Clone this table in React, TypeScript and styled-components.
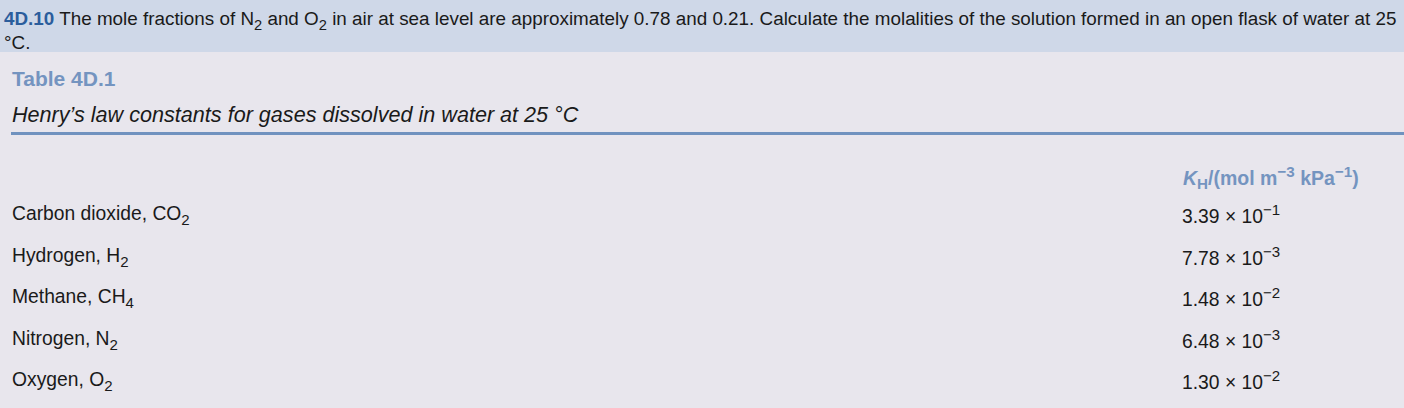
import React from 'react'
import styled, { createGlobalStyle } from 'styled-components'

//-----------------------------------------------------------------------------
// Data
//-----------------------------------------------------------------------------
const gases = [
  { name: 'Carbon dioxide, CO', sub: '2', mantissa: '3.39', exp: '−1' },
  { name: 'Hydrogen, H', sub: '2', mantissa: '7.78', exp: '−3' },
  { name: 'Methane, CH', sub: '4', mantissa: '1.48', exp: '−2' },
  { name: 'Nitrogen, N', sub: '2', mantissa: '6.48', exp: '−3' },
  { name: 'Oxygen, O', sub: '2', mantissa: '1.30', exp: '−2' }
]

//-----------------------------------------------------------------------------
// Component
//-----------------------------------------------------------------------------
const App = () => {
  return (
    <>
      <GlobalStyle />
      <Page>
        <Question>
          <QuestionNumber>4D.10</QuestionNumber> The mole fractions of N<Sub>2</Sub> and O<Sub>2</Sub> in
          air at sea level are approximately 0.78 and 0.21. Calculate the molalities of the solution
          formed in an open flask of water at 25 °C.
        </Question>
        <TableBlock>
          <TableLabel>Table 4D.1</TableLabel>
          <TableCaption>Henry’s law constants for gases dissolved in water at 25 °C</TableCaption>
          <Rows>
            <HeaderRow>
              <Cell />
              <HeadCell>
                <i>K</i><Sub>H</Sub>/(mol m<Sup>−3</Sup> kPa<Sup>−1</Sup>)
              </HeadCell>
            </HeaderRow>
            {gases.map(gas => (
              <Row key={gas.name}>
                <Cell>{gas.name}<Sub>{gas.sub}</Sub></Cell>
                <Cell>{gas.mantissa} × 10<Sup>{gas.exp}</Sup></Cell>
              </Row>
            ))}
          </Rows>
        </TableBlock>
      </Page>
    </>
  )
}

//-----------------------------------------------------------------------------
// Styled Components
//-----------------------------------------------------------------------------
const GlobalStyle = createGlobalStyle`
  html, body {
    margin: 0;
    padding: 0;
    background: #e8e6ed;
  }
  body {
    font-family: "Liberation Sans", Arial, sans-serif;
    color: #1a1a1a;
  }
`

const Page = styled.div`
  width: 1404px;
  height: 408px;
  overflow: hidden;
  background: #e8e6ed;
`

const Question = styled.div`
  background: #cfd8e8;
  box-sizing: border-box;
  padding: 8px 4px 0 4px;
  font-size: 18.85px;
  line-height: 22px;
  height: 52px;
`

const QuestionNumber = styled.span`
  color: #2b5d9c;
  font-weight: bold;
`

const Sub = styled.sub`
  font-size: 0.78em;
  vertical-align: -0.32em;
  line-height: 1;
`

const Sup = styled.sup`
  font-size: 0.78em;
  vertical-align: 0.5em;
  line-height: 1;
`

const TableBlock = styled.div`
  padding: 15px 0 0 11px;
`

const TableLabel = styled.div`
  color: #7494c0;
  font-weight: bold;
  font-size: 21px;
  line-height: 24px;
  padding-left: 1px;
`

const TableCaption = styled.div`
  font-style: italic;
  font-size: 21.6px;
  line-height: 24px;
  margin-top: 12px;
  padding: 0 0 5px 1px;
  border-bottom: 3px solid #7092bf;
`

const Rows = styled.div`
  display: flex;
  flex-direction: column;
  padding-top: 29px;
`

const Row = styled.div`
  display: grid;
  grid-template-columns: 1170px 1fr;
  height: 41.5px;
  font-size: 19.3px;
  line-height: 24px;
  padding-left: 1px;
`

const HeaderRow = styled(Row)`
  height: 38px;
  font-size: 19.5px;
`

const Cell = styled.div``

const HeadCell = styled.div`
  color: #7494c0;
  font-weight: bold;
  margin-left: 1px;
`

export default App
